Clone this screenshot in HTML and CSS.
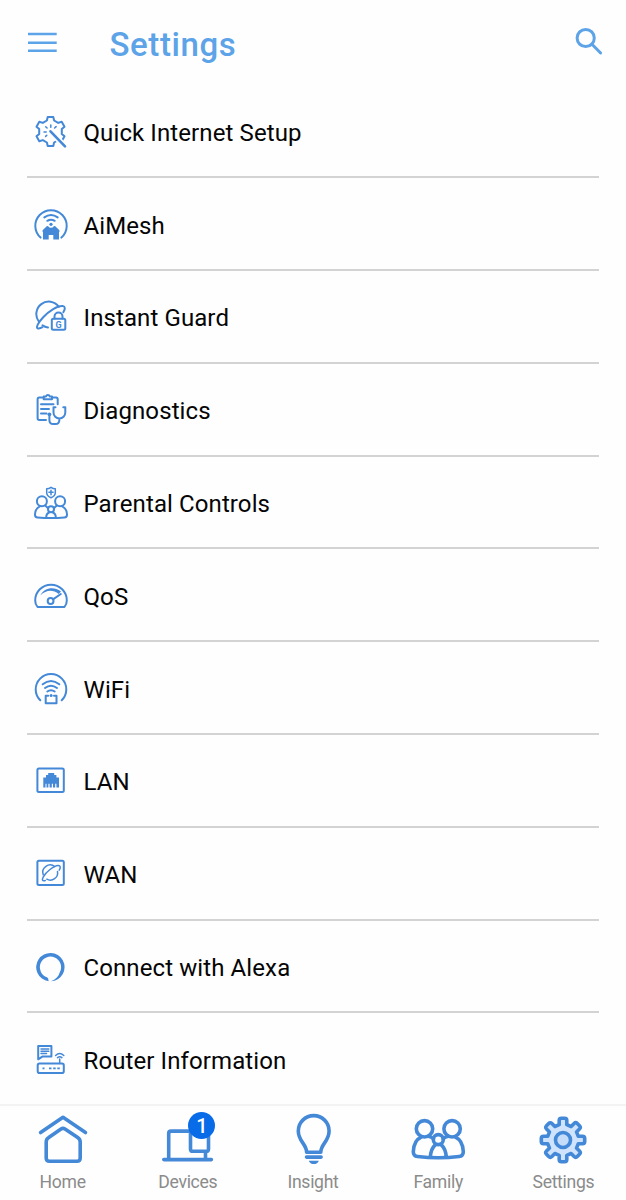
FILE: index.html
```
<!DOCTYPE html>
<html lang="en">
<head>
  <meta charset="UTF-8">
  <title>Settings</title>
  <link rel="stylesheet" href="styles.css">
</head>
<body>

  <header class="header">
    <svg class="menu" viewBox="0 0 30 22"><path d="M0 2h28.7M0 10.7h28.7M0 18.8h28.7"/></svg>
    <h1>Settings</h1>
    <svg class="search" viewBox="0 0 30 30"><circle cx="11.7" cy="12" r="8.6"/><path d="M18 18.3L26.6 27"/></svg>
  </header>

  <ul class="list">
    <li>
      <svg viewBox="0 0 36 36">
        <path d="M13.9 5.5L14.7 2h5.6l.8 3.5 4.1 2.4 3.5-1.1 2.8 4.9-2.7 2.4v4.8l2.7 2.4-2.8 4.9-3.5-1.1-4.1 2.4-.8 3.5h-5.6l-.8-3.5-4.1-2.4-3.5 1.1-2.8-4.9 2.7-2.4v-4.8l-2.7-2.4 2.8-4.9 3.5 1.1z"/>
        <path class="gap" d="M24 23l9 10"/>
        <path class="thick" d="M17.5 16.3L32 31.3"/>
        <path class="thin" d="M17.8 10v2.2M12.7 11.7l1.4 1.3M11 17h2.2M13.8 20.2l-1.2 1.2M21.6 13l1.5-1.4"/>
      </svg>
      <span>Quick Internet Setup</span>
    </li>
    <li>
      <svg viewBox="0 0 36 36">
        <path d="M7.6 29.6A15.7 15.7 0 1 1 28.4 29.6"/>
        <path d="M11.3 9.4q6.7-4.7 13.4 0M14.3 12.8q3.7-2.3 7.4 0"/>
        <path class="fill" d="M9.6 22.3L14 18l1.2.2a3.2 3.2 0 0 0 5.6 0L22 18l4.4 4.3V24H26v7.5h-5.7V27h-4.6v4.5H10V24h-.4z"/>
        <circle class="fill" cx="18" cy="16.3" r="1.6"/>
      </svg>
      <span>AiMesh</span>
    </li>
    <li>
      <svg viewBox="0 0 36 36">
        <path d="M25.7 6.6A12.4 12.4 0 0 0 5.8 21.5M9.5 25.3q2.500 1.900 5.500 2.200"/>
        <path d="M30.300 12.200c2.200-3.300 2-5.900-.6-6.200C24.500 5.500 16 11 10.200 17.300 5.300 22.600 2.300 27.800 5 28.400q2 .3 4.500-1.200"/>
        <rect x="18.800" y="18.800" width="13.500" height="11" rx="1.500"/>
        <path d="M21.500 18.500v-2a4 4 0 0 1 8 0v2"/>
        <text x="25.600" y="27.700">G</text>
      </svg>
      <span>Instant Guard</span>
    </li>
    <li>
      <svg viewBox="0 0 36 36">
        <path d="M10.500 4.500H6.300Q4.600 4.500 4.600 6.200v19.100q0 1.700 1.700 1.700H13M19 4.500h4q1.700 0 1.700 1.700v5"/>
        <path d="M10.700 6.200V3.500H13a2 2 0 0 1 3.800 0H19v2.700zM8 11.300h12.500M8 15.900h8M8 20.400h5.500"/>
        <path d="M22.500 14.300h-2v5.200a5.800 5.800 0 0 0 11.800 0v-5.200h-2M26.300 25.400v1.800q0 3.800-3.800 3.800h-2.300q-3.800 0-3.800-3.800v-4.500"/>
        <circle class="fill" cx="16.400" cy="21.300" r="1.900"/>
      </svg>
      <span>Diagnostics</span>
    </li>
    <li>
      <svg viewBox="0 0 36 36">
        <path class="thin" d="M18 1.300q2 1.500 4.300 1.500v3.900q0 3.200-4.300 5-4.300-1.800-4.300-5V2.800Q16 2.800 18 1.300zM18 4.200v4.600M15.900 6.200h4.200"/>
        <circle cx="8.900" cy="15.200" r="5"/>
        <circle cx="27.100" cy="15.200" r="5"/>
        <circle cx="18" cy="23.200" r="3"/>
        <path d="M6.800 20.300q-4.600 2.200-4.800 8.200-.1 2.700 2.600 3 13.400 1.200 26.800 0 2.700-.3 2.600-3-.2-6-4.800-8.200M12.200 19.500l2.700 2.500M23.800 19.500L21.100 22M13.200 31.500q0-4 3.300-5.300M22.800 31.500q0-4-3.300-5.300"/>
      </svg>
      <span>Parental Controls</span>
    </li>
    <li>
      <svg viewBox="0 0 36 36">
        <path d="M4.500 27.900Q2.200 25.500 2.200 21.500a15.800 15.800 0 0 1 31.600 0q0 4-2.300 6.400z"/>
        <path class="fill" d="M7.300 16.500C11.500 8.500 20.500 7 28 12.400l-2.300 2.700C20 10.500 13.500 10.500 7.300 16.500z"/>
        <circle cx="17.600" cy="22" r="2.900"/>
        <path d="M20 20.300l7.800-5.300"/>
      </svg>
      <span>QoS</span>
    </li>
    <li>
      <svg viewBox="0 0 36 36">
        <path d="M7.300 28.300A15.300 15.300 0 1 1 28.700 28.300"/>
        <path d="M9.700 12.300q8.300-6.600 16.600 0M12 16q6-4.600 12 0M14.300 19.500q3.700-2.600 7.400 0M15.200 23.800h-2.500v7.500h10.800v-7.500H21"/>
        <circle class="fill" cx="18.100" cy="23.600" r="1.500"/>
      </svg>
      <span>WiFi</span>
    </li>
    <li>
      <svg viewBox="0 0 36 36">
        <rect x="4.400" y="4.500" width="26.400" height="23.600" rx="1.500"/>
        <path class="fill" d="M10.300 23.500v-10H13V11h2.200V9h6v2h2.200v2.500H26v10h-2.600v-3.800h-1.200v3.800H20v-3.800h-1.200v3.800h-2.200v-3.800h-1.200v3.800h-1.900v-3.800h-1v3.800z"/>
      </svg>
      <span>LAN</span>
    </li>
    <li>
      <svg viewBox="0 0 36 36">
        <rect x="4.400" y="3.700" width="26.400" height="24.200" rx="1.500"/>
        <path class="thin" d="M21.800 9.600A7.400 7.400 0 0 0 10.200 17.800M13.800 22.200A7.300 7.300 0 0 0 24.500 14.500"/>
        <path class="thin" d="M26.200 13.200c1.700-2.800 1.300-4.700-1-4.600-4.700.4-12.200 6.200-14.900 11.200-1.700 3.100-.9 4.600 2 3.700"/>
      </svg>
      <span>WAN</span>
    </li>
    <li>
      <svg viewBox="0 0 36 36">
        <path class="fill" d="M15.600 31.200A14.200 14.200 0 1 1 18 31.300C22.500 29.800 25.500 26.800 27 21.800A10.600 10.600 0 1 0 14 27.200Q15.600 27.900 15.600 31.200z"/>
      </svg>
      <span>Connect with Alexa</span>
    </li>
    <li>
      <svg viewBox="0 0 36 36">
        <path d="M5.200 2.900h13.200v10.500H9.600L5.200 16.300z"/>
        <path class="thin" d="M8 6.100h7.800M8 8.300h7.800M8 10.400h5.500M22.600 12.500q4.100-4 8.200 0M24.500 14.600q2.200-1.800 4.400 0M26.700 16v4.500"/>
        <rect x="4.700" y="20.500" width="26.100" height="9.600" rx="1.800"/>
        <path class="dots" d="M9.500 25.300h2M16 25.300h2.500M20.200 25.300h2.500M24.300 25.300h2.500"/>
      </svg>
      <span>Router Information</span>
    </li>
  </ul>

  <nav class="tabs">
    <a class="tab">
      <svg viewBox="0 0 56 56">
        <path d="M5.600 20.500L28 5.300l22.500 15.200M11.200 30q0-3 2.500-4.600L26 17q2-1.300 4 0l12.700 8.400q2.500 1.600 2.500 4.600v16q0 3.300-3.300 3.300H14.500q-3.300 0-3.300-3.300z"/>
      </svg>
      <span>Home</span>
    </a>
    <a class="tab">
      <svg viewBox="0 0 56 56">
        <path d="M8.700 47V21.500q0-2.400 2.400-2.400h34.600q2.800 0 2.800 2.400v15.400q0 2.400-2.400 2.400H32.900q-2.400 0-2.400-2.400V19M45.500 39.500V47M3.800 47.600h47.600"/>
      </svg>
      <b class="badge">1</b>
      <span>Devices</span>
    </a>
    <a class="tab">
      <svg viewBox="0 0 56 56">
        <path d="M21.600 40.300c0-8.500-8.300-10.800-8.300-21.300a15.400 15.400 0 0 1 30.800 0c0 10.500-8.300 12.800-8.300 21.300zM21.500 45.100h14.600"/>
        <path class="fill" d="M23.800 48.700h10q-1.300 3.400-5 3.400t-5-3.400z"/>
      </svg>
      <span>Insight</span>
    </a>
    <a class="tab">
      <svg viewBox="0 0 56 56">
        <circle cx="14.500" cy="16.800" r="8.200"/>
        <circle cx="42.100" cy="16.800" r="8.200"/>
        <circle cx="28.300" cy="27.600" r="5"/>
        <path d="M11.500 24.900Q3.600 28.700 3.300 39.700q0 4.300 4.200 4.800 20.800 2.600 41.600 0 4.200-.5 4.200-4.800-.3-11-8.200-14.800M18.500 24.200q3 .6 5 2.600M38.100 24.200q-3 .6-5 2.600M20.300 45.700q.2-8.500 5.200-13M36.300 45.700q-.2-8.500-5.200-13"/>
      </svg>
      <span>Family</span>
    </a>
    <a class="tab active">
      <svg viewBox="0 0 56 56">
        <path d="M24.200 12.700V8.500q0-2.200 2.200-2.200h3.200q2.200 0 2.200 2.200v4.200l4.300 1.800 3-3q1.600-1.600 3.200 0l2.200 2.200q1.600 1.600 0 3.200l-3 3 1.800 4.300h4.200q2.200 0 2.200 2.200v3.200q0 2.200-2.200 2.200h-4.200l-1.800 4.300 3 3q1.600 1.600 0 3.200l-2.200 2.200q-1.600 1.600-3.200 0l-3-3-4.300 1.800v4.200q0 2.200-2.200 2.200h-3.200q-2.200 0-2.200-2.200v-4.200l-4.300-1.800-3 3q-1.600 1.600-3.200 0l-2.200-2.200q-1.600-1.600 0-3.200l3-3-1.800-4.300H8.500q-2.200 0-2.200-2.200v-3.200q0-2.200 2.200-2.200h4.200l1.800-4.300-3-3q-1.600-1.600 0-3.200l2.200-2.200q1.600-1.600 3.200 0l3 3z"/>
        <circle cx="28" cy="28" r="7.500"/>
      </svg>
      <span>Settings</span>
    </a>
  </nav>

</body>
</html>
```
FILE: styles.css
```
body {
  display: flex;
  flex-direction: column;
  height: 1200px;
  margin: 0;
  background: #fefefe;
  font-family: Roboto, sans-serif;
  overflow: hidden;
}
svg {
  flex: none;
  fill: none;
  stroke: #4488d8;
  stroke-width: 2;
  stroke-linecap: round;
  stroke-linejoin: round;
}
.header {
  display: flex;
  align-items: center;
  height: 85.4px;
  padding: 0 22px 0 28px;
  box-sizing: border-box;
}
.header svg {
  stroke: #5ca3e8;
  stroke-linecap: butt;
}
.header h1 {
  flex: 1;
  margin: 4px 0 0 51.5px;
  color: #5ca3e8;
  font-size: 33px;
  font-weight: 500;
  line-height: 40px;
  letter-spacing: 0.6px;
}
.menu {
  width: 30px;
  height: 22px;
  stroke-width: 2.5;
}
.header .search {
  width: 30px;
  height: 30px;
  margin-bottom: 3px;
  stroke-width: 3;
  stroke-linecap: round;
}
.list {
  flex: 1;
  min-height: 0;
  margin: 0;
  padding: 0 27px;
  list-style: none;
  overflow: hidden;
}
.list li {
  display: flex;
  align-items: center;
  height: 92.8px;
  padding: 4.2px 0 0 6px;
  box-sizing: border-box;
  border-bottom: 2px solid #d3d3d3;
  color: #050505;
  font-size: 24px;
  letter-spacing: 0.1px;
}
.list li:last-child {
  border-color: transparent;
}
.list svg {
  width: 36px;
  height: 36px;
  margin-right: 14.5px;
}
.list .thin {
  stroke-width: 1.5;
}
.list .thick {
  stroke-width: 2.6;
}
.list .dots {
  stroke-width: 1.8;
  stroke-linecap: butt;
}
.list .gap {
  stroke: #fefefe;
  stroke-width: 6;
}
.list text {
  fill: #4488d8;
  stroke: none;
  font-size: 9px;
  font-weight: 700;
  text-anchor: middle;
}
svg .fill {
  fill: #4488d8;
  stroke: none;
}
.tabs {
  display: flex;
  height: 96px;
  box-sizing: border-box;
  border-top: 2px solid #f3f3f3;
}
.tab {
  display: flex;
  flex: 1;
  flex-direction: column;
  align-items: center;
  position: relative;
  padding-top: 6px;
  color: #8b8b8b;
  font-size: 17.6px;
  line-height: 20px;
  letter-spacing: -0.3px;
}
.tab svg {
  width: 56px;
  height: 56px;
  margin-bottom: 4px;
  stroke-width: 3.6;
}
.active path {
  fill: #d0e3fc;
}
.active circle {
  fill: #c6ddfa;
}
.badge {
  position: absolute;
  top: 6px;
  left: 63px;
  width: 27px;
  height: 27px;
  border-radius: 50%;
  background: #086be8;
  color: #fff;
  font-size: 20px;
  font-weight: 500;
  line-height: 28px;
  text-align: center;
}
```
